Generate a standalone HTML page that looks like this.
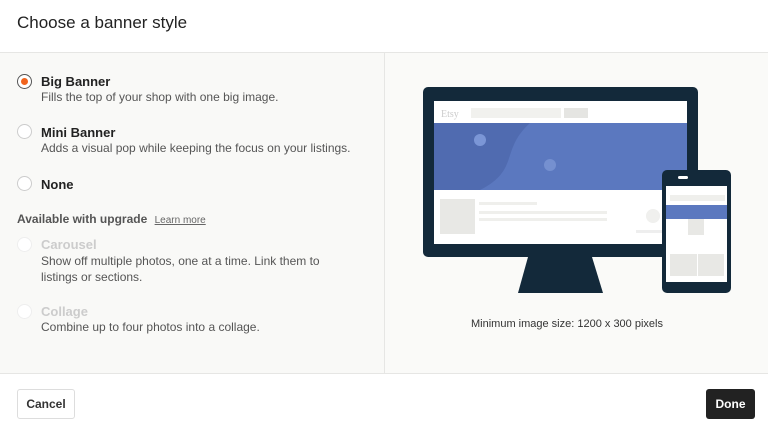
<!DOCTYPE html>
<html><head><style>
*{margin:0;padding:0;box-sizing:border-box}
body{width:768px;height:431px;background:#fff;font-family:"Liberation Sans",sans-serif;position:relative;overflow:hidden;color:#222}
.a{position:absolute}
.t{font-size:13px;font-weight:bold;color:#222}
.d{font-size:12px;color:#555}
.r{width:15px;height:15px;border:1px solid #ccc;border-radius:50%;background:#fff}
.dis{color:#ccc}
</style></head><body>
<div class="a" style="left:17px;top:13px;font-size:17px;color:#222">Choose a banner style</div>
<div class="a" style="left:0;top:52px;width:768px;height:322px;background:#f9f9f7;border-top:1px solid #e6e6e4;border-bottom:1px solid #e6e6e4"></div>
<div class="a" style="left:384px;top:53px;width:1px;height:320px;background:#e6e6e4"></div>
<div class="a" style="left:385px;top:53px;width:383px;height:320px;background:#fafaf8"></div>

<div class="a r" style="left:17px;top:74px;border:1.5px solid #555"><div style="position:absolute;left:2.5px;top:2.5px;width:7px;height:7px;border-radius:50%;background:#f1641e"></div></div>
<div class="a t" style="left:41px;top:74px">Big Banner</div>
<div class="a d" style="left:41px;top:90px">Fills the top of your shop with one big image.</div>
<div class="a r" style="left:17px;top:124px"></div>
<div class="a t" style="left:41px;top:125px">Mini Banner</div>
<div class="a d" style="left:41px;top:141px">Adds a visual pop while keeping the focus on your listings.</div>
<div class="a r" style="left:17px;top:176px"></div>
<div class="a t" style="left:41px;top:177px">None</div>
<div class="a" style="left:17px;top:212px;font-size:12px;font-weight:bold;color:#555">Available with upgrade <span style="font-size:10px;font-weight:normal;text-decoration:underline;margin-left:4px;color:#666">Learn more</span></div>
<div class="a r" style="left:17px;top:237px;border-color:#eee"></div>
<div class="a t dis" style="left:41px;top:237px;color:#ccc">Carousel</div>
<div class="a d" style="left:41px;top:253px;line-height:16px">Show off multiple photos, one at a time. Link them to<br>listings or sections.</div>
<div class="a r" style="left:17px;top:304px;border-color:#eee"></div>
<div class="a t" style="left:41px;top:304px;color:#ccc">Collage</div>
<div class="a d" style="left:41px;top:320px">Combine up to four photos into a collage.</div>

<svg class="a" style="left:385px;top:53px" width="383" height="320" viewBox="385 53 383 320">
<rect x="423" y="87" width="275" height="170" rx="5" fill="#13293a"/>
<polygon points="528,257 592,257 603,293 518,293" fill="#13293a"/>
<rect x="434" y="101" width="253" height="143" fill="#fff"/>
<text x="441" y="117" font-family="Liberation Serif" font-size="10" fill="#ccc">Etsy</text>
<rect x="471" y="108" width="90" height="10" fill="#f1f1ee"/><rect x="564" y="108" width="24" height="10" fill="#e5e5e2"/>
<rect x="434" y="123" width="253" height="67" fill="#5b78bf"/>
<path d="M434 123 L530 123 C500 150 520 170 480 190 L434 190Z" fill="#506bb0"/>
<circle cx="480" cy="140" r="6" fill="#7b96d6"/><circle cx="550" cy="165" r="6" fill="#7590d0"/>
<rect x="440" y="199" width="35" height="35" fill="#e8e8e5"/>
<rect x="479" y="202" width="58" height="3" fill="#efefec"/><rect x="479" y="211" width="128" height="3" fill="#efefec"/><rect x="479" y="218" width="128" height="3" fill="#efefec"/>
<circle cx="653" cy="216" r="7" fill="#f0f0ee"/><rect x="636" y="230" width="50" height="3" fill="#eee"/>
<rect x="662" y="170" width="69" height="123" rx="5" fill="#13293a"/>
<rect x="678" y="176" width="10" height="3" rx="1.5" fill="#fff"/>
<rect x="666" y="186" width="61" height="96" fill="#fff"/>
<rect x="670" y="195" width="55" height="6" fill="#efefec"/>
<rect x="666" y="205" width="61" height="14" fill="#5b78bf"/>
<rect x="688" y="219" width="16" height="16" fill="#e8e8e5"/>
<rect x="670" y="254" width="27" height="22" fill="#e8e8e5"/><rect x="698" y="254" width="26" height="22" fill="#e8e8e5"/>
</svg>
<div class="a" style="left:471px;top:318px;font-size:11px;color:#333">Minimum image size: 1200 x 300 pixels</div>

<div class="a" style="left:17px;top:389px;width:58px;height:30px;border:1px solid #ddd;border-radius:3px;font-size:12px;font-weight:bold;color:#333;text-align:center;line-height:28px">Cancel</div>
<div class="a" style="left:706px;top:389px;width:49px;height:30px;background:#222;border-radius:3px;font-size:12px;font-weight:bold;color:#fff;text-align:center;line-height:30px">Done</div>
</body></html>
